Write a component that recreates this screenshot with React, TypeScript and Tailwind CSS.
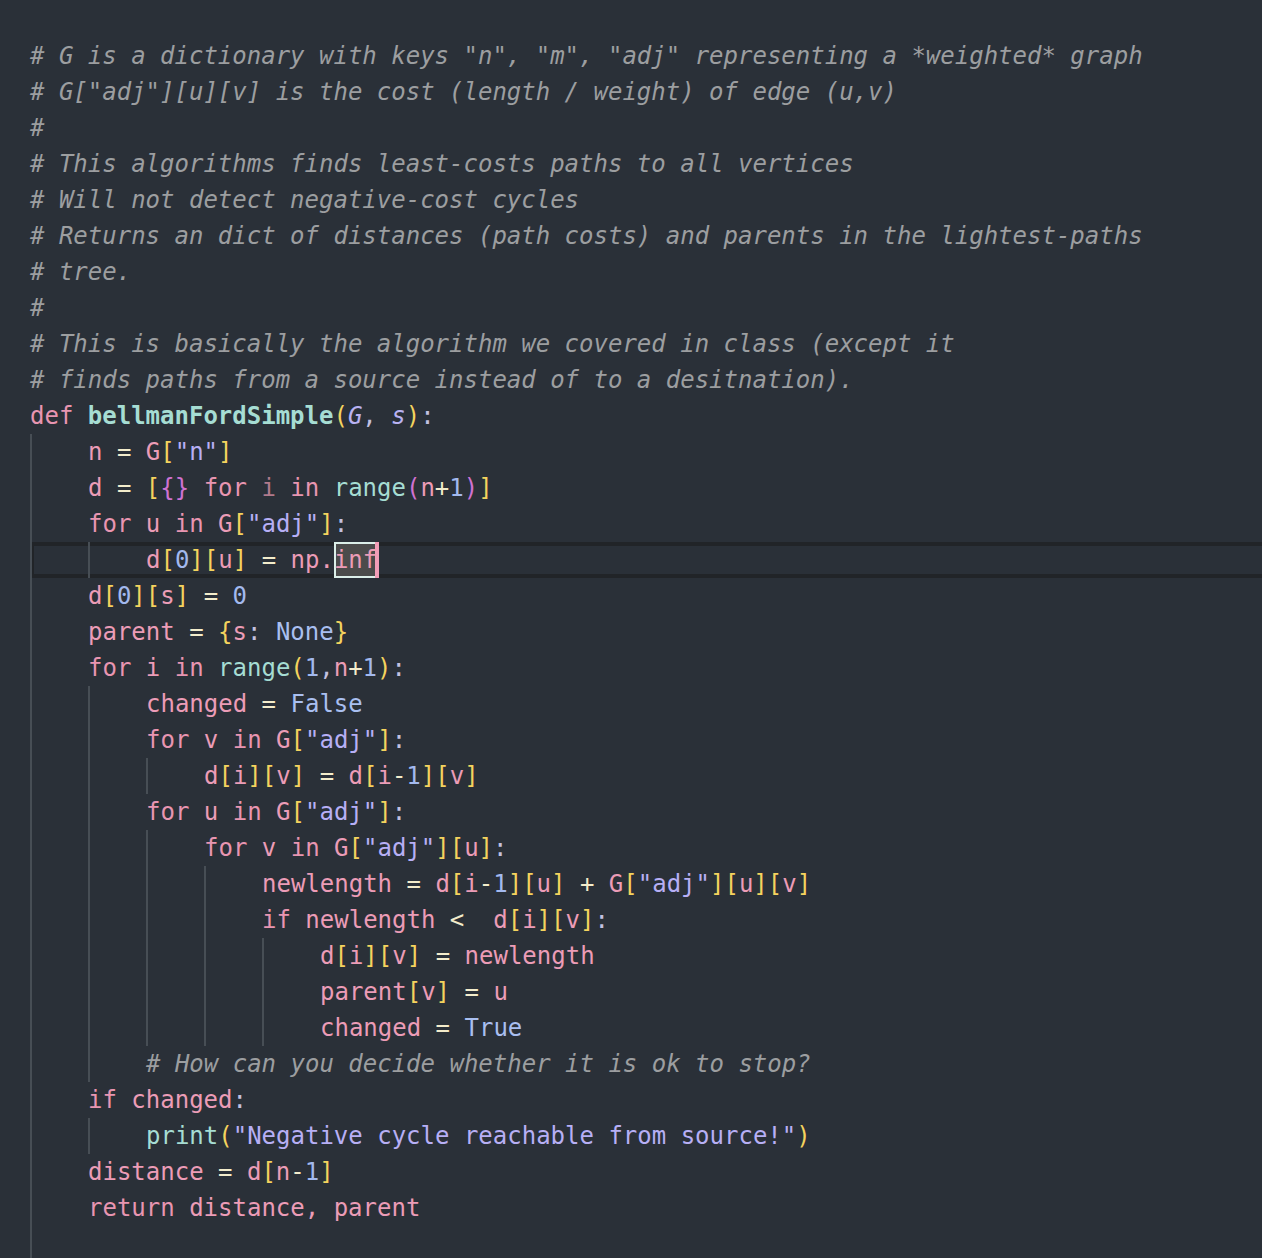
import React from "react";

const CLS: Record<string, string> = {
  c: "text-[#9c9ea0] italic",
  k: "text-[#e895b1]",
  v: "text-[#ec9cb7]",
  x: "text-[#b07a8c]",
  f: "text-[#a6ddd3]",
  fb: "text-[#a6ddd3] font-bold",
  y: "text-[#f4d35e]",
  m: "text-[#cf72d2]",
  s: "text-[#b7aff5]",
  n: "text-[#a3b9ee]",
  b: "text-[#a9bff0]",
  o: "text-[#f3eccb]",
  p: "text-[#c3c1e0]",
  a: "text-[#b9b2f2] italic",
  t: "",
};

const KW = new Set(["def", "for", "in", "if", "return"]);
const CONST = new Set(["None", "False", "True"]);
const FN = new Set(["range", "print"]);

type Tok = [string, string];

function tokenize(src: string, overrides: Record<number, string> = {}): Tok[] {
  const re = /(\s+)|("[^"]*")|(\d+)|([A-Za-z_][A-Za-z0-9_]*)|([\[\]\(\)\{\}])|([=+<\-])|([:,])|(\.)/g;
  const out: Tok[] = [];
  let depth = 0;
  let m: RegExpExecArray | null;
  let idx = 0;
  while ((m = re.exec(src)) !== null) {
    const t = m[0];
    let type = "t";
    if (m[1]) type = "t";
    else if (m[2]) type = "s";
    else if (m[3]) type = "n";
    else if (m[4]) {
      if (KW.has(t)) type = "k";
      else if (CONST.has(t)) type = "b";
      else if (FN.has(t)) type = "f";
      else type = "v";
    } else if (m[5]) {
      if ("[({".includes(t)) {
        type = depth % 2 === 0 ? "y" : "m";
        depth++;
      } else {
        depth--;
        type = depth % 2 === 0 ? "y" : "m";
      }
    } else if (m[6]) type = "o";
    else if (m[7]) type = "p";
    else if (m[8]) type = "v";
    if (overrides[idx] !== undefined) type = overrides[idx];
    out.push([t, type]);
    idx++;
  }
  return out;
}

function Line({ src, overrides, comment, children }: { src?: string; overrides?: Record<number, string>; comment?: boolean; children?: React.ReactNode }) {
  if (comment) {
    return (
      <div className="h-[36px] leading-[36px] whitespace-pre">
        <span className={CLS.c}>{src}</span>
      </div>
    );
  }
  const toks = src ? tokenize(src, overrides) : [];
  return (
    <div className="h-[36px] leading-[36px] whitespace-pre">
      {toks.map(([t, ty], i) => (
        <span key={i} className={CLS[ty]}>
          {t}
        </span>
      ))}
      {children}
    </div>
  );
}

function Body({ children, grow }: { children: React.ReactNode; grow?: boolean }) {
  return (
    <div className={"border-l-2 border-[#474e55] pl-[56px]" + (grow ? " flex-1" : "")}>{children}</div>
  );
}

const comments = [
  '# G is a dictionary with keys "n", "m", "adj" representing a *weighted* graph',
  '# G["adj"][u][v] is the cost (length / weight) of edge (u,v)',
  "#",
  "# This algorithms finds least-costs paths to all vertices",
  "# Will not detect negative-cost cycles",
  "# Returns an dict of distances (path costs) and parents in the lightest-paths",
  "# tree.",
  "#",
  "# This is basically the algorithm we covered in class (except it",
  "# finds paths from a source instead of to a desitnation).",
];

export default function App() {
  return (
    <div
      className="min-h-[1258px] w-full bg-[#2a3038] pt-[38px] pl-[30px] flex flex-col text-[24px]"
      style={{ fontFamily: '"DejaVu Sans Mono", "Liberation Mono", monospace' }}
    >
      {comments.map((c, i) => (
        <Line key={i} src={c} comment />
      ))}
      <Line src="def bellmanFordSimple(G, s):" overrides={{ 2: "fb", 4: "a", 7: "a" }} />
      <Body grow>
        <Line src='n = G["n"]' />
        <Line src="d = [{} for i in range(n+1)]" overrides={{ 10: "x" }} />
        <Line src='for u in G["adj"]:' />
        <div className="-ml-[56px] pl-[56px] shadow-[inset_2px_4px_0_0_#212428,inset_0_-4px_0_0_#212428]">
          <Body>
            <Line src="d[0][u] = np.">
              <span className="relative inline-block h-[36px] bg-[#4b4b4b] text-[#ec9cb7] shadow-[inset_0_0_0_2px_#dcefe9]">
                inf
                <span className="absolute right-[-2px] top-0 h-full w-[4px] bg-[#f29db7]" />
              </span>
            </Line>
          </Body>
        </div>
        <Line src="d[0][s] = 0" />
        <Line src="parent = {s: None}" />
        <Line src="for i in range(1,n+1):" />
        <Body>
          <Line src="changed = False" />
          <Line src='for v in G["adj"]:' />
          <Body>
            <Line src="d[i][v] = d[i-1][v]" />
          </Body>
          <Line src='for u in G["adj"]:' />
          <Body>
            <Line src='for v in G["adj"][u]:' />
            <Body>
              <Line src='newlength = d[i-1][u] + G["adj"][u][v]' />
              <Line src="if newlength <  d[i][v]:" />
              <Body>
                <Line src="d[i][v] = newlength" />
                <Line src="parent[v] = u" />
                <Line src="changed = True" />
              </Body>
            </Body>
          </Body>
          <Line src="# How can you decide whether it is ok to stop?" comment />
        </Body>
        <Line src="if changed:" />
        <Body>
          <Line src='print("Negative cycle reachable from source!")' />
        </Body>
        <Line src="distance = d[n-1]" />
        <Line src="return distance, parent" overrides={{ 3: "v" }} />
      </Body>
    </div>
  );
}
